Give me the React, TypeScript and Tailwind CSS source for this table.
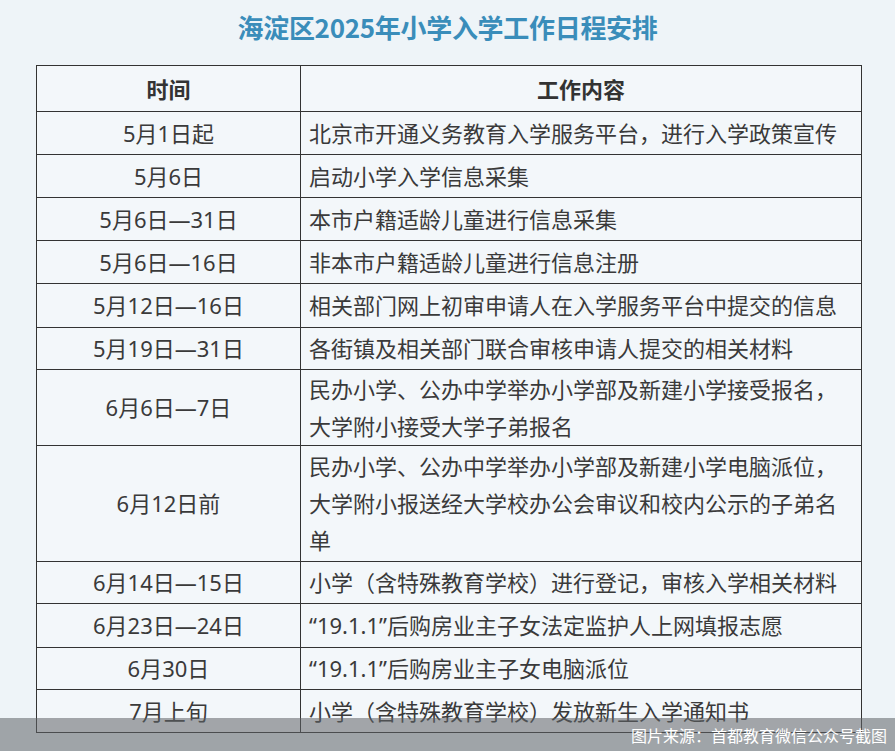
import React from 'react';

// 日程数据
const schedule: { date: string; work: string; h: string }[] = [
  { date: '5月1日起', work: '北京市开通义务教育入学服务平台，进行入学政策宣传', h: 'h-[43px]' },
  { date: '5月6日', work: '启动小学入学信息采集', h: 'h-[43px]' },
  { date: '5月6日—31日', work: '本市户籍适龄儿童进行信息采集', h: 'h-[43px]' },
  { date: '5月6日—16日', work: '非本市户籍适龄儿童进行信息注册', h: 'h-[43px]' },
  { date: '5月12日—16日', work: '相关部门网上初审申请人在入学服务平台中提交的信息', h: 'h-[44px]' },
  { date: '5月19日—31日', work: '各街镇及相关部门联合审核申请人提交的相关材料', h: 'h-[42px]' },
  {
    date: '6月6日—7日',
    work: '民办小学、公办中学举办小学部及新建小学接受报名，大学附小接受大学子弟报名',
    h: 'h-[76px]',
  },
  {
    date: '6月12日前',
    work: '民办小学、公办中学举办小学部及新建小学电脑派位，大学附小报送经大学校办公会审议和校内公示的子弟名单',
    h: 'h-[116px]',
  },
  { date: '6月14日—15日', work: '小学（含特殊教育学校）进行登记，审核入学相关材料', h: 'h-[42px]' },
  { date: '6月23日—24日', work: '“19.1.1”后购房业主子女法定监护人上网填报志愿', h: 'h-[44px]' },
  { date: '6月30日', work: '“19.1.1”后购房业主子女电脑派位', h: 'h-[42px]' },
  { date: '7月上旬', work: '小学（含特殊教育学校）发放新生入学通知书', h: 'h-[43px]' },
];

export default function App() {
  return (
    <div
      className="relative w-[895px] h-[751px] overflow-hidden bg-[#eef4f8] text-[#3a3a3a]"
      style={{ fontFamily: '"Noto Sans CJK SC", "Noto Sans", sans-serif' }}
    >
      {/* Title */}
      <div className="h-[65px] flex justify-center pt-[8px]">
        <h1 className="text-[26px] leading-[38px] font-bold text-[#3a8dba] tracking-[-0.3px]">
          海淀区2025年小学入学工作日程安排
        </h1>
      </div>

      {/* Table */}
      <div className="pl-[36px] pr-[33px]">
        <table className="w-full border-collapse bg-[#f3f7fa]">
          <thead>
            <tr className="h-[46px]">
              <th className="w-[264px] border border-[#333] text-[22px] font-bold text-[#333] text-center">
                时间
              </th>
              <th className="border border-[#333] text-[22px] font-bold text-[#333] text-center">
                工作内容
              </th>
            </tr>
          </thead>
          <tbody className="font-['Noto_Sans','Noto_Sans_CJK_SC',sans-serif]">
            {schedule.map((row) => (
              <tr key={row.date} className={row.h}>
                <td className="border border-[#333] text-center text-[22px] leading-[37px] px-2">
                  {row.date}
                </td>
                <td className="border border-[#333] text-left text-[22px] leading-[37px] pl-[8px] pr-[6px] py-0">
                  {row.work}
                </td>
              </tr>
            ))}
          </tbody>
        </table>
      </div>

      {/* Source caption overlay */}
      <div className="absolute left-0 right-0 bottom-0 h-[33px] bg-[#5f6266]/55 flex items-center justify-end pr-[8px]">
        <span className="text-[16px] text-white">图片来源：首都教育微信公众号截图</span>
      </div>
    </div>
  );
}
